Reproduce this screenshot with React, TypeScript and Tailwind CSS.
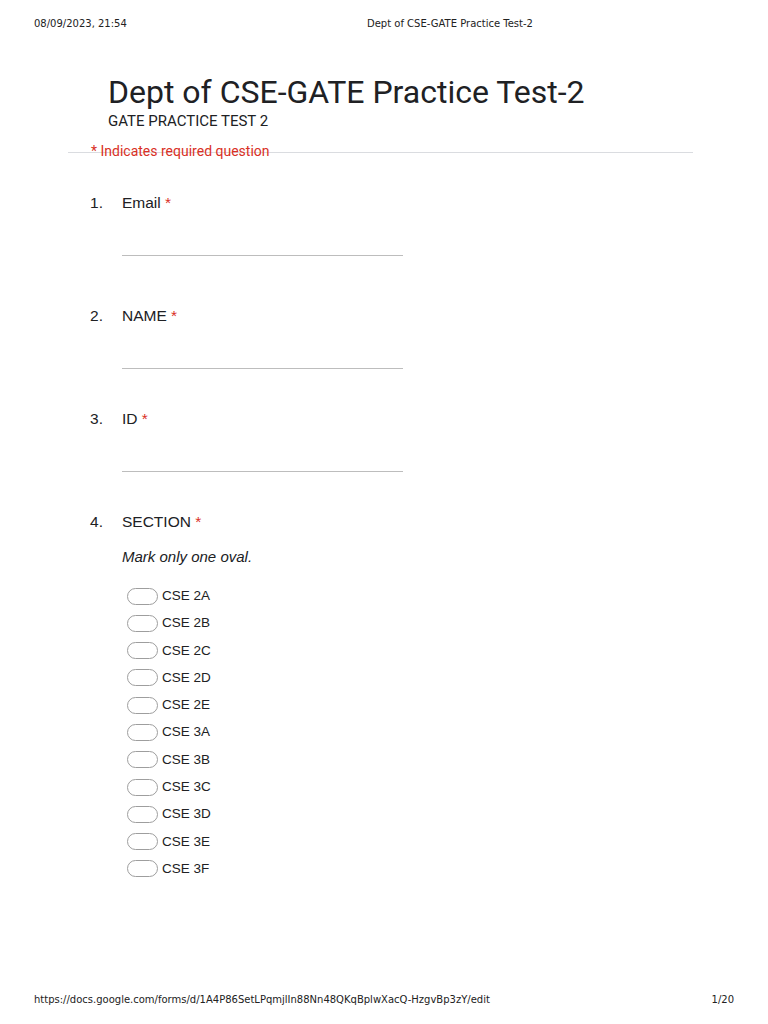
import React from 'react';

const options = ['CSE 2A', 'CSE 2B', 'CSE 2C', 'CSE 2D', 'CSE 2E', 'CSE 3A', 'CSE 3B', 'CSE 3C', 'CSE 3D', 'CSE 3E', 'CSE 3F'];

const arial = { fontFamily: '"Liberation Sans", Arial, sans-serif' };

const Question: React.FC<{ num: number; label: string; children?: React.ReactNode }> = ({ num, label, children }) => (
  <div className="flex" style={arial}>
    <div className="w-[33px] pl-[1px] text-[15.5px] leading-[20px] text-[#202124]">{num}.</div>
    <div className="flex-1">
      <div className="text-[15.5px] leading-[20px] text-[#202124]">
        {label} <span className="text-[#d93025]">*</span>
      </div>
      {children}
    </div>
  </div>
);

const TextLine = () => <div className="mt-[42px] w-[281px] border-b border-[#bdbdbd]" />;

export default function App() {
  return (
    <div className="relative flex h-[1024px] w-[768px] flex-col bg-white" style={{ fontFamily: 'Roboto, "Liberation Sans", Arial, sans-serif' }}>
      {/* print header */}
      <div className="flex h-[47px] items-start px-[34px] pt-[17px] text-[10px] leading-[14px] text-[#222]" style={{ fontFamily: '"DejaVu Sans", sans-serif' }}>
        <span className="w-[333px]">08/09/2023, 21:54</span>
        <span>Dept of CSE-GATE Practice Test-2</span>
      </div>

      <div className="mt-[26px] pl-[108px]">
        <h1 className="text-[32px] leading-[38px] text-[#202124]">Dept of CSE-GATE Practice Test-2</h1>
        <div className="mt-[1px] text-[15px] leading-[18px] text-[#202124]">GATE PRACTICE TEST 2</div>
      </div>

      <div className="ml-[68px] mt-[13px] h-[10px] w-[625px] border-b border-[#dadce0]">
        <div className="relative top-[0px] pl-[23px] text-[14px] leading-[17px] text-[#d93025]">* Indicates required question</div>
      </div>

      <div className="ml-[89px] mt-[40px] flex flex-col">
        <Question num={1} label="Email">
          <TextLine />
        </Question>
        <div className="mt-[50px]">
          <Question num={2} label="NAME">
            <TextLine />
          </Question>
        </div>
        <div className="mt-[40px]">
          <Question num={3} label="ID">
            <TextLine />
          </Question>
        </div>
        <div className="mt-[40px]">
          <Question num={4} label="SECTION">
            <div className="mt-[15px] text-[15px] italic leading-[20px] text-[#202124]">Mark only one oval.</div>
            <div className="mt-[20px] flex flex-col gap-[9.3px]">
              {options.map((o) => (
                <div key={o} className="flex items-center">
                  <div className="ml-[5px] h-[17px] w-[31px] rounded-full border border-[#9e9e9e]" />
                  <span className="ml-[4px] text-[13.5px] leading-[18px] text-[#202124]">{o}</span>
                </div>
              ))}
            </div>
          </Question>
        </div>
      </div>

      {/* print footer */}
      <div className="mt-auto flex h-[31px] items-start justify-between px-[34px] text-[10px] leading-[14px] text-[#222]" style={{ fontFamily: '"DejaVu Sans", sans-serif' }}>
        <span>https://docs.google.com/forms/d/1A4P86SetLPqmjlIn88Nn48QKqBplwXacQ-HzgvBp3zY/edit</span>
        <span>1/20</span>
      </div>
    </div>
  );
}
